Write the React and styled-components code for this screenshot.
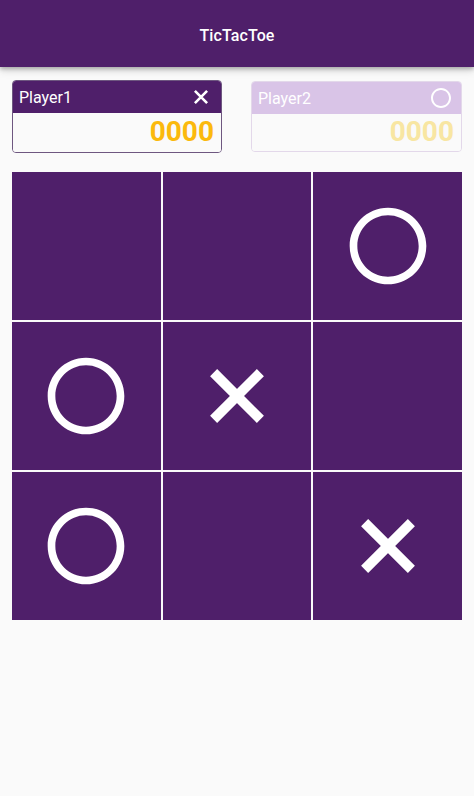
import React from 'react'
import styled, { createGlobalStyle } from 'styled-components'

const GlobalStyle = createGlobalStyle`
    body {
        margin: 0;
        background: #fafafa;
        font-family: Roboto, "Noto Sans", sans-serif;
    }
`

const purple = '#4f1f6a'

const Page = styled.div`
    min-height: 796px;
    background: #fafafa;
`
const AppBar = styled.header`
    height: 67px;
    background: ${purple};
    display: flex;
    align-items: center;
    justify-content: center;
    box-shadow: 0 2px 4px rgba(0, 0, 0, 0.25), 0 4px 8px rgba(0, 0, 0, 0.12);
    position: relative;
    z-index: 1;
`
const Title = styled.h1`
    margin: 0;
    color: white;
    font-size: 16px;
    font-weight: 500;
    letter-spacing: 0.1px;
    padding-top: 3px;
`
const Content = styled.main`
    padding: 13px 12px 0 12px;
`
const Players = styled.div`
    display: flex;
    justify-content: space-between;
    align-items: flex-start;
`
const Card = styled.div`
    width: ${({ active }) => (active ? '210px' : '211px')};
    height: ${({ active }) => (active ? '73px' : '71px')};
    box-sizing: border-box;
    border: 1px solid ${({ active }) => (active ? '#6e5780' : '#e3d8ea')};
    border-radius: 4px;
    overflow: hidden;
    display: flex;
    flex-direction: column;
    margin-top: ${({ active }) => (active ? '0' : '1px')};
`
const CardHead = styled.div`
    height: 32px;
    flex-shrink: 0;
    background: ${({ active }) => (active ? purple : '#d9c4e7')};
    display: flex;
    align-items: center;
    justify-content: space-between;
    padding: 0 8px 0 6px;
    color: white;
    font-size: 16px;
`
const Score = styled.div`
    flex: 1;
    display: flex;
    align-items: center;
    justify-content: flex-end;
    padding: 0 7px 2px 0;
    font-size: 28px;
    font-weight: 700;
    color: ${({ active }) => (active ? '#fbb90d' : '#f8e6a2')};
    background: #fafafa;
`
const Board = styled.div`
    margin-top: 19px;
    width: 450px;
    display: grid;
    grid-template-columns: repeat(3, 1fr);
    grid-template-rows: repeat(3, 148px);
    gap: 2px;
`
const Cell = styled.div`
    background: ${purple};
    display: flex;
    align-items: center;
    justify-content: center;
`

// X drawn as two thick strokes with flat ends
const Cross = ({ size = 24, color = 'white' }) => (
    <svg width={size} height={size} viewBox="0 0 24 24" fill="none" stroke={color} strokeWidth="2.6">
        <path d="M5.9 5.9L18.1 18.1M18.1 5.9L5.9 18.1" />
    </svg>
)

const Ring = ({ size = 24, color = 'white' }) => (
    <svg width={size} height={size} viewBox="0 0 24 24" fill={color}>
        <path d="M12 2C6.48 2 2 6.48 2 12s4.48 10 10 10 10-4.48 10-10S17.52 2 12 2zm0 18c-4.42 0-8-3.58-8-8s3.58-8 8-8 8 3.58 8 8-3.58 8-8 8z" />
    </svg>
)

const board = ['', '', 'o', 'o', 'x', '', 'o', '', 'x']

const players = [
    { name: 'Player1', mark: 'x', score: '0000', active: true },
    { name: 'Player2', mark: 'o', score: '0000', active: false },
]

const Mark = ({ mark, size }) => {
    if (mark === 'x') return <Cross size={size} />
    if (mark === 'o') return <Ring size={size} />
    return null
}

export default function App() {
    return (
        <Page>
            <GlobalStyle />
            <AppBar>
                <Title>TicTacToe</Title>
            </AppBar>
            <Content>
                <Players>
                    {players.map(p => (
                        <Card key={p.name} active={p.active}>
                            <CardHead active={p.active}>
                                <span>{p.name}</span>
                                <Mark mark={p.mark} size={24} />
                            </CardHead>
                            <Score active={p.active}>{p.score}</Score>
                        </Card>
                    ))}
                </Players>
                <Board>
                    {board.map((m, i) => (
                        <Cell key={i}>
                            <Mark mark={m} size={92} />
                        </Cell>
                    ))}
                </Board>
            </Content>
        </Page>
    )
}
